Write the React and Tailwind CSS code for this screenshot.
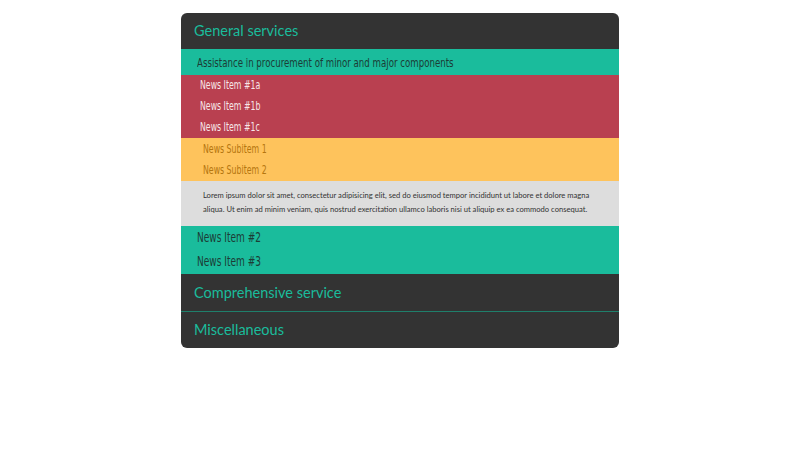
import React from 'react';

const redItems = ['News Item #1a', 'News Item #1b', 'News Item #1c'];
const subItems = ['News Subitem 1', 'News Subitem 2'];

// condensed label: DejaVu Sans Condensed squeezed a bit further
const Narrow = ({ children }) => (
  <span className="inline-block origin-left scale-x-[0.75] whitespace-nowrap font-['DejaVu_Sans_Condensed',sans-serif]">
    {children}
  </span>
);

const Section = ({ label, border }) => (
  <div className={`h-[37px] flex items-center px-[13px] text-[14.5px] text-[#1abc9c] font-['Lato',sans-serif] ${border ? 'border-t border-[#1f7f6b]' : ''}`}>
    {label}
  </div>
);

export default function App() {
  return (
    <div className="w-[800px] h-[450px] bg-white pt-[13px] pl-[181px]">
      <div className="w-[438px] bg-[#333333] rounded-md overflow-hidden">
        <div className="h-[36px] flex items-center px-[13px] text-[14.5px] text-[#1abc9c] font-['Lato',sans-serif]">
          General services
        </div>

        <div className="h-[26px] flex items-center px-[16px] pt-[1px] bg-[#1abc9c] text-[12.8px] text-[#1c3d36]">
          <Narrow>Assistance in procurement of minor and major components</Narrow>
        </div>

        <div className="bg-[#b94050]">
          {redItems.map((t) => (
            <div key={t} className="h-[21px] flex items-center px-[19px] pt-[1px] text-[11.6px] text-[#f7e6e8]">
              <Narrow>{t}</Narrow>
            </div>
          ))}
        </div>

        <div className="bg-[#fec35c]">
          {subItems.map((t) => (
            <div key={t} className="h-[21.5px] flex items-center px-[22px] pt-[1px] text-[11.6px] text-[#b5760f]">
              <Narrow>{t}</Narrow>
            </div>
          ))}
        </div>

        <div className="h-[45px] flex items-center pl-[22px] pr-[20px] pb-[3px] bg-[#dddddd] text-[7.6px] leading-[14px] text-[#333333] font-['Lato',sans-serif]">
          <p>
            Lorem ipsum dolor sit amet, consectetur adipisicing elit, sed do eiusmod tempor incididunt ut labore et dolore magna aliqua. Ut enim ad minim veniam, quis nostrud exercitation ullamco laboris nisi ut aliquip ex ea commodo consequat.
          </p>
        </div>

        <div className="bg-[#1abc9c]">
          {['News Item #2', 'News Item #3'].map((t) => (
            <div key={t} className="h-[24px] flex items-center px-[16px] pt-[1px] text-[13.4px] text-[#1c3d36]">
              <Narrow>{t}</Narrow>
            </div>
          ))}
        </div>

        <Section label="Comprehensive service" />
        <Section label="Miscellaneous" border />
      </div>
    </div>
  );
}
